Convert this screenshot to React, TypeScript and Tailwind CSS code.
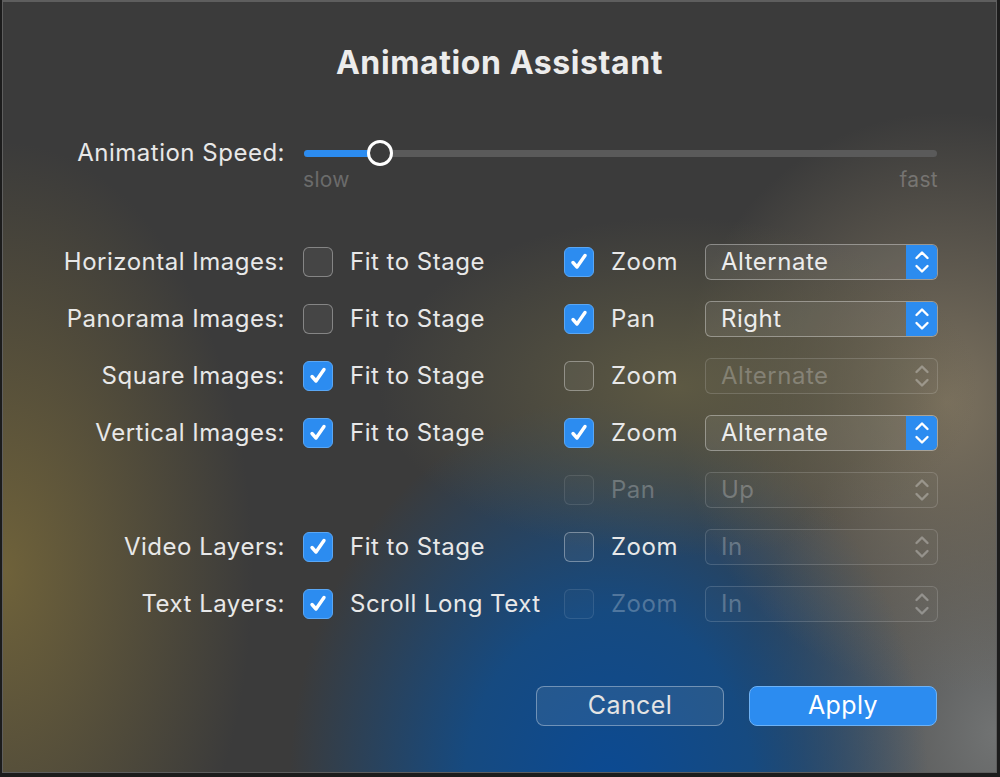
import React from 'react';

type Row = {
  label: string;
  first?: { text: string; checked: boolean };
  second: { text: string; checked: boolean; disabled?: boolean };
  select: { value: string; disabled?: boolean };
};

const rows: Row[] = [
  { label: 'Horizontal Images:', first: { text: 'Fit to Stage', checked: false }, second: { text: 'Zoom', checked: true }, select: { value: 'Alternate' } },
  { label: 'Panorama Images:', first: { text: 'Fit to Stage', checked: false }, second: { text: 'Pan', checked: true }, select: { value: 'Right' } },
  { label: 'Square Images:', first: { text: 'Fit to Stage', checked: true }, second: { text: 'Zoom', checked: false }, select: { value: 'Alternate', disabled: true } },
  { label: 'Vertical Images:', first: { text: 'Fit to Stage', checked: true }, second: { text: 'Zoom', checked: true }, select: { value: 'Alternate' } },
  { label: '', second: { text: 'Pan', checked: false, disabled: true }, select: { value: 'Up', disabled: true } },
  { label: 'Video Layers:', first: { text: 'Fit to Stage', checked: true }, second: { text: 'Zoom', checked: false }, select: { value: 'In', disabled: true } },
  { label: 'Text Layers:', first: { text: 'Scroll Long Text', checked: true }, second: { text: 'Zoom', checked: false, disabled: true }, select: { value: 'In', disabled: true } },
];

const Checkbox: React.FC<{ checked: boolean; disabled?: boolean }> = ({ checked, disabled }) => {
  if (checked) {
    return (
      <div className="w-[30px] h-[30px] rounded-[6px] bg-[#2c8cf0] border border-[#5aa7f5] flex items-center justify-center shrink-0">
        <svg width="18" height="17" viewBox="0 0 18 17" fill="none">
          <path d="M3 9.5 L7 14 L15 2.5" stroke="white" strokeWidth="3.4" strokeLinecap="round" strokeLinejoin="round" />
        </svg>
      </div>
    );
  }
  return (
    <div
      className={`w-[30px] h-[30px] rounded-[6px] shrink-0 border-[1.5px] ${
        disabled ? 'border-white/10 bg-white/[0.02]' : 'border-white/35 bg-white/[0.05]'
      }`}
    />
  );
};

const Chevrons: React.FC<{ color: string }> = ({ color }) => (
  <svg width="16" height="26" viewBox="0 0 16 26" fill="none">
    <path d="M2.5 9 L8 3.5 L13.5 9" stroke={color} strokeWidth="2.4" strokeLinecap="round" strokeLinejoin="round" />
    <path d="M2.5 17 L8 22.5 L13.5 17" stroke={color} strokeWidth="2.4" strokeLinecap="round" strokeLinejoin="round" />
  </svg>
);

const Select: React.FC<{ value: string; disabled?: boolean }> = ({ value, disabled }) => (
  <div
    className={`w-[233px] h-[36px] rounded-[6px] border flex items-center overflow-hidden ${
      disabled ? 'border-white/15 bg-white/[0.02]' : 'border-white/35 bg-white/[0.07]'
    }`}
  >
    <span className={`flex-1 pl-[15px] ${disabled ? 'text-white/25' : 'text-[#ececec]'}`}>{value}</span>
    <div className={`w-[31px] h-full flex items-center justify-center ${disabled ? '' : 'bg-[#2c8cf0]'}`}>
      <Chevrons color={disabled ? 'rgba(255,255,255,0.3)' : 'white'} />
    </div>
  </div>
);

export default function App() {
  return (
    <div className="w-[1000px] h-[777px] bg-[#1c1c1c] pl-[2px] pr-[3px] pb-[4px] overflow-hidden">
      <div
        className="w-full h-full border-t-2 border-l border-r border-b border-[#5e5e5e] bg-[#3b3b3b] bg-[image:radial-gradient(250px_430px_at_0%_74%,#6f623a,transparent),radial-gradient(300px_170px_at_68%_50%,#5d5943,transparent),radial-gradient(270px_290px_at_95%_52%,#7c725f,transparent),radial-gradient(320px_390px_at_61%_102%,#0b4a93_0%,#164a80_45%,transparent),radial-gradient(260px_330px_at_100%_95%,#717373,transparent)] font-['Inter',sans-serif] text-[24px] tracking-[0.5px] text-[#e8e8e8]"
      >
        <h1 className="pt-[42px] h-[79px] text-center text-[32px] leading-[38px] font-bold text-[#ececec] tracking-[0.6px]">
          Animation Assistant
        </h1>

        {/* Slider */}
        <div className="mt-[57px] flex items-center h-[30px]">
          <div className="w-[282px] text-right">Animation Speed:</div>
          <div className="ml-[19px] w-[633px] relative h-[30px] flex items-center">
            <div className="w-full h-[7px] rounded-full bg-[#5a5a5a] flex">
              <div className="w-[76px] h-full rounded-full bg-[#2c8cf0]" />
            </div>
            <div className="absolute left-[63px] top-[2px] w-[26px] h-[26px] rounded-full border-[3px] border-white bg-[#3b3b3b]" />
          </div>
        </div>
        <div className="flex h-[24px] leading-[24px] text-[21px] tracking-[0.3px] text-white/25">
          <div className="ml-[300px] w-[635px] flex justify-between">
            <span>slow</span>
            <span>fast</span>
          </div>
        </div>

        {/* Options */}
        <div className="mt-[41px] flex flex-col">
          {rows.map((row, i) => (
            <div key={i} className="h-[57px] flex items-center">
              <div className="w-[282px] text-right">{row.label}</div>
              <div className="ml-[18px] w-[261px] flex items-center">
                {row.first && (
                  <>
                    <Checkbox checked={row.first.checked} />
                    <span className="ml-[17px]">{row.first.text}</span>
                  </>
                )}
              </div>
              <div className="w-[141px] flex items-center">
                <Checkbox checked={row.second.checked} disabled={row.second.disabled} />
                <span className={`ml-[17px] ${row.second.disabled ? 'text-white/25' : ''}`}>{row.second.text}</span>
              </div>
              <Select value={row.select.value} disabled={row.select.disabled} />
            </div>
          ))}
        </div>

        {/* Buttons */}
        <div className="mt-[54px] flex justify-end gap-[25px] pr-[59px]">
          <button className="w-[188px] h-[40px] rounded-[8px] border border-white/35 bg-white/[0.08] text-[#e4e4e4] text-[25px] tracking-[0.4px]">
            Cancel
          </button>
          <button className="w-[188px] h-[40px] rounded-[8px] border border-[#6db2f6] bg-[#2c8cf0] text-white text-[25px] tracking-[0.4px]">
            Apply
          </button>
        </div>
      </div>
    </div>
  );
}
